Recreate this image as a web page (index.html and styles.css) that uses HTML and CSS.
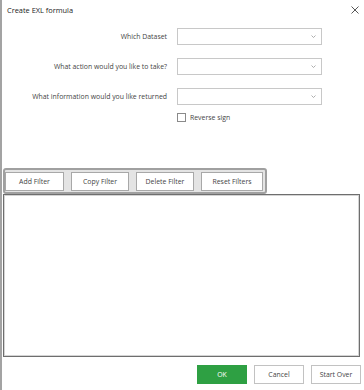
FILE: index.html
```html
<!DOCTYPE html>
<html>
<head>
<meta charset="utf-8">
<link rel="stylesheet" href="styles.css">
</head>
<body>
<div class="dialog">
  <div class="header">
    <span class="title">Create EXL formula</span>
    <svg class="close" width="8" height="8" viewBox="0 0 8 8"><path d="M0.5 0.5 L7.5 7.5 M7.5 0.5 L0.5 7.5" stroke="#444" stroke-width="0.9" fill="none"/></svg>
  </div>
  <div class="form">
    <label class="label">Which Dataset</label>
    <div class="select"><svg class="chev" width="5" height="3" viewBox="0 0 5 3"><path d="M0.5 0.5 L2.5 2.5 L4.5 0.5" stroke="#999" stroke-width="0.8" fill="none"/></svg></div>
    <label class="label">What action would you like to take?</label>
    <div class="select"><svg class="chev" width="5" height="3" viewBox="0 0 5 3"><path d="M0.5 0.5 L2.5 2.5 L4.5 0.5" stroke="#999" stroke-width="0.8" fill="none"/></svg></div>
    <label class="label">What information would you like returned</label>
    <div class="select"><svg class="chev" width="5" height="3" viewBox="0 0 5 3"><path d="M0.5 0.5 L2.5 2.5 L4.5 0.5" stroke="#999" stroke-width="0.8" fill="none"/></svg></div>
    <span></span>
    <div class="check"><span class="box"></span><span>Reverse sign</span></div>
  </div>
  <div class="toolbar">
    <button class="tbtn w1">Add Filter</button>
    <button class="tbtn w2">Copy Filter</button>
    <button class="tbtn w3">Delete Filter</button>
    <button class="tbtn w4">Reset Filters</button>
  </div>
  <div class="panel"></div>
  <div class="footer">
    <button class="fbtn ok">OK</button>
    <button class="fbtn">Cancel</button>
    <button class="fbtn">Start Over</button>
  </div>
</div>
</body>
</html>
```
FILE: styles.css
```css
* { box-sizing: border-box; }
html, body { margin: 0; padding: 0; background: #fff; }
body {
  width: 364px;
  height: 390px;
  overflow: hidden;
  font-family: "Open Sans", "Noto Sans", sans-serif;
  color: #333;
}
.dialog {
  height: 390px;
  border-left: 2px solid #a3a3a3;
}
.header {
  height: 20px;
  display: flex;
  align-items: center;
  justify-content: space-between;
  padding: 0 5px 0 5px;
}
.title { font-size: 7.4px; color: #222; }
.close { margin-top: 0; }
.form {
  display: grid;
  grid-template-columns: 165px 145px;
  column-gap: 10px;
  row-gap: 13px;
  padding-top: 8px;
  align-items: center;
}
.label {
  text-align: right;
  font-size: 6.9px;
  color: #444;
  white-space: nowrap;
}
.select {
  height: 17px;
  border: 1px solid #c8c8c8;
  background: #fff;
  position: relative;
}
.chev { position: absolute; right: 5px; top: 6px; }
.check {
  display: flex;
  align-items: center;
  gap: 4px;
  font-size: 6.9px;
  color: #444;
  margin-top: -5px;
}
.box {
  width: 9px; height: 9px;
  border: 1px solid #8a8a8a;
  background: #fff;
}
.toolbar {
  margin: 46px 0 0 1px;
  width: 264px;
  height: 26px;
  border: 2px solid #a0a0a0;
  border-radius: 3px;
  background: #e4e4e4;
  display: flex;
  gap: 7px;
  padding: 2px 0 0 0;
}
.tbtn {
  height: 19px;
  border: 1px solid #a8a8a8;
  background: #fff;
  font-family: inherit;
  font-size: 6.9px;
  color: #444;
  padding: 0;
}
.w1 { width: 59px; }
.w2 { width: 58px; }
.w3 { width: 58px; }
.w4 { width: 62px; }
.panel {
  margin-left: 1px;
  width: 357px;
  height: 163px;
  border: 1px solid #6e6e6e;
  box-shadow: inset 0 0 0 1px #d4d4d4;
  background: #fff;
}
.footer {
  display: flex;
  justify-content: flex-end;
  gap: 7px;
  padding: 8px 3px 0 0;
}
.fbtn {
  width: 50px;
  height: 19px;
  border: 1px solid #c2c2c2;
  background: #fff;
  font-family: inherit;
  font-size: 6.9px;
  color: #444;
  padding: 0;
}
.ok { background: #2ea043; border-color: #2ea043; color: #fff; }
```
